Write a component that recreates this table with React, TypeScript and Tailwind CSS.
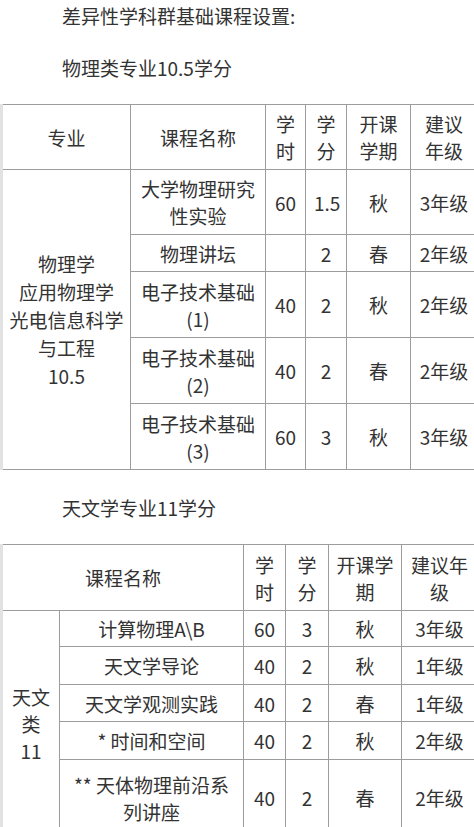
import React from "react"

const cell = "border border-[#9c9c9c] px-2 text-center align-middle text-[19px] leading-[27px] text-[#333]"
const first = "border-l-[3px] border-l-[#e2e2e2]"

type Row = { name: React.ReactNode; hours: string; credit: string; term: string; grade: string; h: string }

const physicsRows: Row[] = [
  { name: "大学物理研究性实验", hours: "60", credit: "1.5", term: "秋", grade: "3年级", h: "h-[65px]" },
  { name: "物理讲坛", hours: "", credit: "2", term: "春", grade: "2年级", h: "h-[37px]" },
  { name: <>电子技术基础<br />(1)</>, hours: "40", credit: "2", term: "秋", grade: "2年级", h: "h-[66px]" },
  { name: <>电子技术基础<br />(2)</>, hours: "40", credit: "2", term: "春", grade: "2年级", h: "h-[66px]" },
  { name: <>电子技术基础<br />(3)</>, hours: "60", credit: "3", term: "秋", grade: "3年级", h: "h-[66px]" },
]

const astroRows: Row[] = [
  { name: "计算物理A\\B", hours: "60", credit: "3", term: "秋", grade: "3年级", h: "h-[36px]" },
  { name: "天文学导论", hours: "40", credit: "2", term: "秋", grade: "1年级", h: "h-[38px]" },
  { name: "天文学观测实践", hours: "40", credit: "2", term: "春", grade: "1年级", h: "h-[37px]" },
  { name: "* 时间和空间", hours: "40", credit: "2", term: "秋", grade: "2年级", h: "h-[38px]" },
  { name: "** 天体物理前沿系列讲座", hours: "40", credit: "2", term: "春", grade: "2年级", h: "h-[76px]" },
]

function Rest({ r }: { r: Row }) {
  return (
    <>
      <td className={cell}>{r.hours}</td>
      <td className={cell}>{r.credit}</td>
      <td className={cell}>{r.term}</td>
      <td className={cell}>{r.grade}</td>
    </>
  )
}

export default function App() {
  return (
    <div className="w-[474px] h-[827px] overflow-hidden bg-white text-[#333] text-[19px] leading-[27px] font-['Noto_Sans_CJK_SC',sans-serif]">
      <p className="pl-[62px] pt-[2px]">差异性学科群基础课程设置:</p>
      <p className="pl-[62px] mt-[25px]">物理类专业10.5学分</p>

      <table className="mt-[23px] w-[476px] table-fixed border-collapse">
        <colgroup>
          <col className="w-[129px]" />
          <col className="w-[135px]" />
          <col className="w-[40px]" />
          <col className="w-[41px]" />
          <col className="w-[64px]" />
          <col className="w-[67px]" />
        </colgroup>
        <tbody>
          <tr className="h-[65px]">
            <td className={`${cell} ${first}`}>专业</td>
            <td className={cell}>课程名称</td>
            <td className={cell}>学<br />时</td>
            <td className={cell}>学<br />分</td>
            <td className={cell}>开课<br />学期</td>
            <td className={cell}>建议<br />年级</td>
          </tr>
          {physicsRows.map((r, i) => (
            <tr key={i} className={r.h}>
              {i === 0 && (
                <td rowSpan={5} className={`${cell} ${first} leading-[28px]! px-1!`}>
                  物理学<br />应用物理学<br />光电信息科学<br />与工程<br />10.5
                </td>
              )}
              <td className={cell}>{r.name}</td>
              <Rest r={r} />
            </tr>
          ))}
        </tbody>
      </table>

      <p className="pl-[62px] mt-[24px]">天文学专业11学分</p>

      <table className="mt-[23px] w-[476px] table-fixed border-collapse">
        <colgroup>
          <col className="w-[58px]" />
          <col className="w-[184px]" />
          <col className="w-[42px]" />
          <col className="w-[43px]" />
          <col className="w-[73px]" />
          <col className="w-[76px]" />
        </colgroup>
        <tbody>
          <tr className="h-[66px]">
            <td colSpan={2} className={`${cell} ${first}`}>课程名称</td>
            <td className={cell}>学<br />时</td>
            <td className={cell}>学<br />分</td>
            <td className={`${cell} px-[5px]!`}>开课学期</td>
            <td className={`${cell} px-[5px]!`}>建议年级</td>
          </tr>
          {astroRows.map((r, i) => (
            <tr key={i} className={r.h}>
              {i === 0 && (
                <td rowSpan={5} className={`${cell} ${first} px-1!`}>
                  天文<br />类<br />11
                </td>
              )}
              <td className={cell}>{r.name}</td>
              <Rest r={r} />
            </tr>
          ))}
        </tbody>
      </table>
    </div>
  )
}
